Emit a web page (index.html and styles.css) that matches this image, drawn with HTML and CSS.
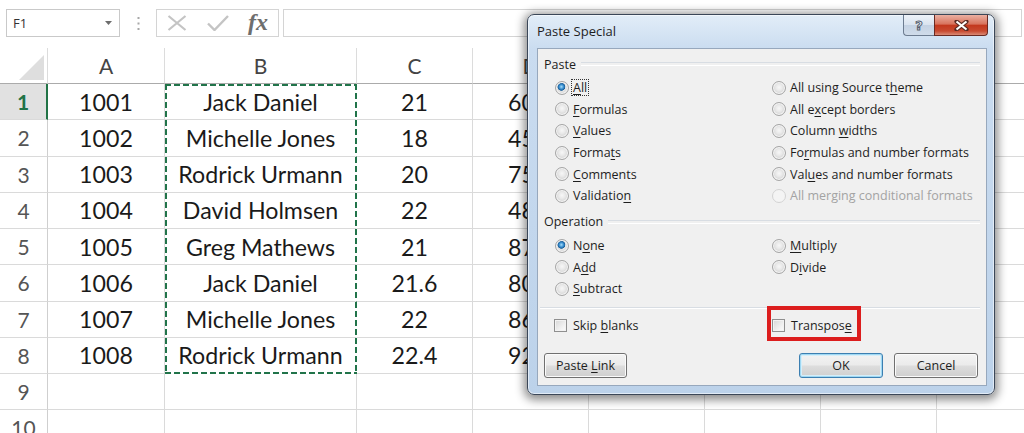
FILE: index.html
```html
<!DOCTYPE html>
<html lang="en">
<head>
<meta charset="utf-8">
<title>Paste Special</title>
<link rel="stylesheet" href="styles.css">
</head>
<body>
<div class="app">
  <div class="fbar">
    <div class="namebox">
      <span>F1</span>
      <svg class="nb-arrow" width="7" height="4" viewBox="0 0 7 4"><path d="M0 0h7L3.5 4z" fill="#6d6d6d"/></svg>
    </div>
    <svg class="vdots" width="3" height="13" viewBox="0 0 3 13"><rect x="0.5" y="0" width="2" height="2" fill="#a8a8a8"/><rect x="0.5" y="5.5" width="2" height="2" fill="#a8a8a8"/><rect x="0.5" y="11" width="2" height="2" fill="#a8a8a8"/></svg>
    <div class="fbtns">
      <svg class="fb-x" width="20" height="16" viewBox="0 0 20 16"><path d="M1.5 1L18.5 15M18.5 1L1.5 15" stroke="#c4c4c4" stroke-width="2.2" fill="none"/></svg>
      <svg class="fb-check" width="22" height="16" viewBox="0 0 22 16"><path d="M1 8.5L7.5 15L21 1" stroke="#c4c4c4" stroke-width="2.4" fill="none"/></svg>
      <span class="fx">fx</span>
    </div>
    <div class="finput"></div>
  </div>

  <div class="sheet">
    <div class="corner"><svg width="25" height="25" viewBox="0 0 25 25"><path d="M25 0V25H0z" fill="#dedede"/></svg></div>
    <div class="ch">A</div><div class="ch">B</div><div class="ch">C</div><div class="ch">D</div><div class="ch">E</div><div class="ch">F</div><div class="ch">G</div><div class="ch"></div>

    <div class="rh sel">1</div><div class="c">1001</div><div class="c ant first">Jack Daniel</div><div class="c">21</div><div class="c d">60</div><div class="c"></div><div class="c"></div><div class="c"></div><div class="c"></div>
    <div class="rh">2</div><div class="c">1002</div><div class="c ant">Michelle Jones</div><div class="c">18</div><div class="c d">45</div><div class="c"></div><div class="c"></div><div class="c"></div><div class="c"></div>
    <div class="rh">3</div><div class="c">1003</div><div class="c ant">Rodrick Urmann</div><div class="c">20</div><div class="c d">75</div><div class="c"></div><div class="c"></div><div class="c"></div><div class="c"></div>
    <div class="rh">4</div><div class="c">1004</div><div class="c ant">David Holmsen</div><div class="c">22</div><div class="c d">48</div><div class="c"></div><div class="c"></div><div class="c"></div><div class="c"></div>
    <div class="rh">5</div><div class="c">1005</div><div class="c ant">Greg Mathews</div><div class="c">21</div><div class="c d">87</div><div class="c"></div><div class="c"></div><div class="c"></div><div class="c"></div>
    <div class="rh">6</div><div class="c">1006</div><div class="c ant">Jack Daniel</div><div class="c">21.6</div><div class="c d">80</div><div class="c"></div><div class="c"></div><div class="c"></div><div class="c"></div>
    <div class="rh">7</div><div class="c">1007</div><div class="c ant">Michelle Jones</div><div class="c">22</div><div class="c d">86</div><div class="c"></div><div class="c"></div><div class="c"></div><div class="c"></div>
    <div class="rh">8</div><div class="c">1008</div><div class="c ant last">Rodrick Urmann</div><div class="c">22.4</div><div class="c d">92</div><div class="c"></div><div class="c"></div><div class="c"></div><div class="c"></div>
    <div class="rh">9</div><div class="c"></div><div class="c"></div><div class="c"></div><div class="c"></div><div class="c"></div><div class="c"></div><div class="c"></div><div class="c"></div>
    <div class="rh">10</div><div class="c"></div><div class="c"></div><div class="c"></div><div class="c"></div><div class="c"></div><div class="c"></div><div class="c"></div><div class="c"></div>
  </div>

  <div class="dialog">
    <div class="titlebar">
      <span class="title">Paste Special</span>
      <div class="capbtns">
        <div class="cap-help">?</div>
        <div class="cap-close"><svg width="15" height="11" viewBox="0 0 15 11"><path d="M2.5 1.5L12.5 9.5M12.5 1.5L2.5 9.5" stroke="#5b2a24" stroke-width="4.2" fill="none" stroke-linecap="round"/><path d="M2.5 1.5L12.5 9.5M12.5 1.5L2.5 9.5" stroke="#ffffff" stroke-width="2.2" fill="none"/></svg></div>
      </div>
    </div>
    <div class="client">
      <div class="ghead"><span>Paste</span></div>
      <div class="opts">
        <div class="opt"><span class="radio on"></span><span class="focus"><u>A</u>ll</span></div>
        <div class="opt"><span class="radio"></span><span>All using Source t<u>h</u>eme</span></div>
        <div class="opt"><span class="radio"></span><span><u>F</u>ormulas</span></div>
        <div class="opt"><span class="radio"></span><span>All e<u>x</u>cept borders</span></div>
        <div class="opt"><span class="radio"></span><span><u>V</u>alues</span></div>
        <div class="opt"><span class="radio"></span><span>Column <u>w</u>idths</span></div>
        <div class="opt"><span class="radio"></span><span>Forma<u>t</u>s</span></div>
        <div class="opt"><span class="radio"></span><span>Fo<u>r</u>mulas and number formats</span></div>
        <div class="opt"><span class="radio"></span><span><u>C</u>omments</span></div>
        <div class="opt"><span class="radio"></span><span>Val<u>u</u>es and number formats</span></div>
        <div class="opt"><span class="radio"></span><span>Validatio<u>n</u></span></div>
        <div class="opt disabled"><span class="radio"></span><span>All merging conditional formats</span></div>
      </div>
      <div class="ghead op"><span>Operation</span></div>
      <div class="opts">
        <div class="opt"><span class="radio on"></span><span>N<u>o</u>ne</span></div>
        <div class="opt"><span class="radio"></span><span><u>M</u>ultiply</span></div>
        <div class="opt"><span class="radio"></span><span>A<u>d</u>d</span></div>
        <div class="opt"><span class="radio"></span><span>D<u>i</u>vide</span></div>
        <div class="opt"><span class="radio"></span><span><u>S</u>ubtract</span></div>
      </div>
      <div class="sep"></div>
      <div class="checks">
        <div class="opt"><span class="check"></span><span>Skip <u>b</u>lanks</span></div>
        <div class="opt"><span class="hl"><span class="check"></span><span>Transpos<u>e</u></span></span></div>
      </div>
      <div class="buttons">
        <div class="btn link"><span>Paste <u>L</u>ink</span></div>
        <div class="btn ok"><span>OK</span></div>
        <div class="btn"><span>Cancel</span></div>
      </div>
    </div>
  </div>
</div>
</body>
</html>
```

FILE: styles.css
```css
* { box-sizing: border-box; }
html, body { margin: 0; padding: 0; }
body {
  width: 1024px;
  height: 433px;
  overflow: hidden;
  background: #ffffff;
  font-family: "Open Sans", "Noto Sans", sans-serif;
}
.app {
  position: relative;
  width: 1024px;
  height: 433px;
  overflow: hidden;
}

/* formula bar */
.fbar {
  display: flex;
  align-items: center;
  height: 48px;
  padding: 9px 2px 11px 6px;
}
.namebox {
  width: 114px;
  height: 28px;
  border: 1px solid #c9c9c9;
  display: flex;
  align-items: center;
  justify-content: space-between;
  padding: 0 7px 0 6px;
  font-size: 13px;
  color: #333;
}
.vdots { margin-left: 17px; flex: none; }
.fbtns {
  margin-left: 16px;
  width: 123px;
  height: 28px;
  border: 1px solid #d4d4d4;
  display: flex;
  align-items: center;
  padding-left: 10px;
}
.fb-check { margin-left: 20px; }
.fx {
  margin-left: 19px;
  font-family: "Liberation Serif", serif;
  font-style: italic;
  font-weight: 700;
  font-size: 24px;
  line-height: 1;
  color: #6e6e6e;
  margin-top: -2px;
}
.finput {
  margin-left: 4px;
  flex: 1;
  height: 28px;
  border: 1px solid #d4d4d4;
}

/* sheet */
.sheet {
  display: grid;
  width: 1053px;
  grid-template-columns: 48px 117px 192px 116px 116px 116px 116px 116px 116px;
  grid-template-rows: 36px;
  grid-auto-rows: 36.25px;
  font-family: Lato, "Open Sans", sans-serif;
}
.corner {
  display: flex;
  align-items: flex-end;
  justify-content: flex-end;
  padding: 0 3px 3px 0;
  border-right: 1px solid #dcdcdc;
  border-bottom: 1px solid #ababab;
}
.ch {
  display: flex;
  align-items: center;
  justify-content: center;
  font-size: 21px;
  color: #444;
  border-right: 1px solid #dcdcdc;
  border-bottom: 1px solid #ababab;
}
.rh {
  display: flex;
  align-items: center;
  justify-content: center;
  font-size: 21px;
  color: #555;
  border-right: 1px solid #cfcfcf;
  border-bottom: 1px solid #dadada;
}
.rh.sel {
  background: #e1e1e1;
  color: #217346;
  font-weight: 700;
  border-right: 2px solid #217346;
}
.c {
  display: flex;
  align-items: center;
  justify-content: center;
  font-size: 23.2px;
  color: #1a1a1a;
  white-space: nowrap;
  overflow: hidden;
  border-right: 1px solid #dadada;
  border-bottom: 1px solid #dadada;
}
.c.d {
  justify-content: flex-start;
  padding-left: 35px;
}
.c.ant {
  border-right-color: transparent;
  background:
    repeating-linear-gradient(180deg, #21744a 0 6px, transparent 6px 9px) left top / 2px 100% no-repeat border-box,
    repeating-linear-gradient(180deg, #21744a 0 6px, transparent 6px 9px) right top / 2px 100% no-repeat border-box;
}
.c.ant.first {
  background:
    repeating-linear-gradient(90deg, #21744a 0 6px, transparent 6px 9px) left top / 100% 2px no-repeat border-box,
    repeating-linear-gradient(180deg, #21744a 0 6px, transparent 6px 9px) left top / 2px 100% no-repeat border-box,
    repeating-linear-gradient(180deg, #21744a 0 6px, transparent 6px 9px) right top / 2px 100% no-repeat border-box;
}
.c.ant.last {
  border-bottom-color: transparent;
  background:
    repeating-linear-gradient(90deg, #21744a 0 6px, transparent 6px 9px) left bottom / 100% 2px no-repeat border-box,
    repeating-linear-gradient(180deg, #21744a 0 6px, transparent 6px 9px) left top / 2px 100% no-repeat border-box,
    repeating-linear-gradient(180deg, #21744a 0 6px, transparent 6px 9px) right top / 2px 100% no-repeat border-box;
}

/* dialog */
.dialog {
  position: absolute;
  left: 527px;
  top: 14px;
  width: 468px;
  height: 381px;
  border: 1px solid #3b4758;
  border-radius: 7px;
  background: linear-gradient(180deg, #e2edf8 0, #cadcf0 34px, #bcd2ea 100%);
  box-shadow: inset 0 0 0 1px rgba(255,255,255,0.55), 0 2px 10px 3px rgba(0,0,0,0.45);
  display: flex;
  flex-direction: column;
  color: #1e1e1e;
}
.titlebar {
  height: 33px;
  display: flex;
  align-items: flex-start;
  padding-left: 9px;
}
.title {
  font-size: 13px;
  line-height: 33px;
}
.capbtns {
  margin-left: auto;
  margin-right: 6px;
  display: flex;
  height: 21px;
}
.cap-help {
  width: 31px;
  height: 21px;
  border: 1px solid #6d7c90;
  border-top: none;
  border-right: none;
  border-radius: 0 0 0 4px;
  background: linear-gradient(180deg, #eef3f9 0, #d9e3ef 50%, #c4d2e3 51%, #d0dcea 100%);
  display: flex;
  align-items: center;
  justify-content: center;
  font-family: "DejaVu Sans", sans-serif;
  font-weight: 700;
  font-size: 13px;
  color: #eef3f8;
  -webkit-text-stroke: 1px #56606e;
}
.cap-close {
  width: 54px;
  height: 21px;
  border: 1px solid #6a2a22;
  border-top: none;
  border-radius: 0 0 4px 0;
  background: linear-gradient(180deg, #eab0a2 0, #d8735d 45%, #c3381e 52%, #c84a30 80%, #da8a75 100%);
  display: flex;
  align-items: center;
  justify-content: center;
}
.client {
  flex: 1;
  margin: 0 7px 8px 9px;
  background: #f0f0f0;
  border: 1px solid #97a8bd;
  padding: 6px 6px 0;
  display: flex;
  flex-direction: column;
  font-size: 12.5px;
}
.ghead {
  height: 18px;
  display: flex;
  align-items: center;
  gap: 5px;
}
.ghead::after {
  content: "";
  flex: 1;
  height: 2px;
  border-top: 1px solid #d8dde3;
  border-bottom: 1px solid #ffffff;
}
.ghead.op { margin-top: 6.4px; }
.opts {
  margin-top: 4px;
  display: grid;
  grid-template-columns: 217px 1fr;
  grid-auto-rows: 21.6px;
  padding-left: 11px;
}
.opt {
  display: flex;
  align-items: center;
  gap: 4px;
  white-space: nowrap;
}
.opt u, .btn u {
  text-decoration: underline;
  text-underline-offset: 2px;
}
.opt.disabled { color: #a3a3a3; }
.radio {
  flex: none;
  width: 14px;
  height: 14px;
  border-radius: 50%;
  border: 1px solid #a6a6a6;
  background: radial-gradient(circle at 50% 45%, #f7f7f7 0, #eaeaea 3px, #d6d6d6 6px);
  box-shadow: inset 0 0 0 1px #f6f6f6;
}
.radio.on {
  background:
    radial-gradient(circle at 45% 40%, #a8defa 0, #3a8fd0 2.2px, #1a5e98 3.6px, rgba(26,94,152,0) 4.2px),
    radial-gradient(circle at 50% 45%, #f7f7f7 0, #eaeaea 3px, #d6d6d6 6px);
}
.opt.disabled .radio {
  border-color: #d3d3d3;
  background: #f4f4f4;
  box-shadow: none;
}
.focus {
  border: 1px dotted #333;
  padding: 0 1px;
  margin-left: -2px;
  line-height: 15px;
}
.sep {
  margin: 7px 0 0 -4px;
  height: 2px;
  border-top: 1px solid #d8dde3;
  border-bottom: 1px solid #ffffff;
}
.checks {
  margin-top: 7px;
  height: 20px;
  display: grid;
  grid-template-columns: 218px 1fr;
  padding-left: 10px;
}
.checks .opt { gap: 6px; }
.check {
  flex: none;
  width: 13px;
  height: 13px;
  border: 1px solid #8f8f8f;
  background: linear-gradient(135deg, #d6d6d6 0, #f3f3f3 70%, #fbfbfb 100%);
  box-shadow: inset 0 0 0 1px #f2f2f2;
}
.hl {
  display: inline-flex;
  align-items: center;
  gap: 6px;
  border: 4px solid #dc1d1d;
  padding: 7px 5px 3px 1px;
  margin: -11px -9px -7px -5px;
}
.buttons {
  margin-top: 17px;
  display: flex;
  height: 25px;
  padding-right: 2px;
}
.btn {
  width: 84px;
  height: 25px;
  border: 1px solid #707070;
  border-radius: 3px;
  background: linear-gradient(180deg, #f3f3f3 0, #ebebeb 48%, #dddddd 52%, #cfcfcf 100%);
  box-shadow: inset 0 0 0 1px #fbfbfb;
  display: flex;
  align-items: center;
  justify-content: center;
  font-size: 12.5px;
  white-space: nowrap;
}
.btn.link { width: 83px; margin-right: auto; }
.btn.ok {
  border-color: #3c7fb1;
  box-shadow: inset 0 0 0 1px #9fd8f3, inset 0 0 0 2px #d6eef9;
  margin-right: 11px;
}
```
